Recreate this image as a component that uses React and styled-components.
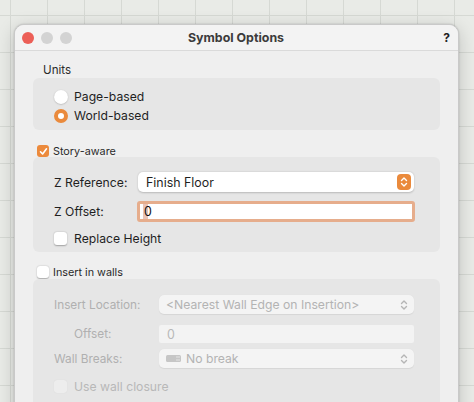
import React from "react";
import styled, { createGlobalStyle } from "styled-components";

const GlobalStyle = createGlobalStyle`
  html, body {
    margin: 0;
    padding: 0;
  }
  body {
    font-family: "Inter", "Liberation Sans", sans-serif;
    -webkit-font-smoothing: antialiased;
  }
`;

const Page = styled.div`
  width: 474px;
  height: 402px;
  overflow: hidden;
  box-sizing: border-box;
  padding: 24px 0 0 14px;
  background-color: #e9ebe7;
  background-image:
    linear-gradient(to right, #d6d9d4 1px, transparent 1px),
    linear-gradient(to bottom, #d6d9d4 1px, transparent 1px);
  background-size: 37px 37px;
  background-position: 10px 15px;
`;

const Window = styled.div`
  width: 445px;
  height: 420px;
  box-sizing: border-box;
  background: #efefef;
  border: 1px solid #c9c9c9;
  border-radius: 10px 10px 0 0;
  box-shadow: 0 4px 18px rgba(0, 0, 0, 0.18), 0 0 2px rgba(0, 0, 0, 0.2);
  overflow: hidden;
`;

const TitleBar = styled.div`
  height: 25px;
  display: flex;
  align-items: center;
  padding: 0 8px 0 7px;
  background: #f3f3f3;
  border-bottom: 1px solid #dadada;
`;

const Lights = styled.div`
  display: flex;
  gap: 7px;
  width: 80px;
`;

const Light = styled.span`
  width: 12px;
  height: 12px;
  border-radius: 50%;
  background: ${(p) => p.$color};
`;

const Title = styled.div`
  flex: 1;
  text-align: center;
  font-size: 12.4px;
  font-weight: 700;
  color: #3b3b3b;
`;

const Help = styled.div`
  width: 80px;
  text-align: right;
  font-size: 12px;
  font-weight: 700;
  color: #222;
`;

const Body = styled.div`
  padding: 12px 18px 0 18px;
  display: flex;
  flex-direction: column;
`;

const SectionLabel = styled.div`
  font-size: 11.6px;
  color: #2a2a2a;
  padding-left: 10px;
  height: 14px;
  line-height: 14px;
`;

const CheckHeader = styled.label`
  display: flex;
  align-items: center;
  gap: 4px;
  font-size: 10.8px;
  color: #2a2a2a;
  padding-left: 4px;
  height: 12px;
  margin-top: ${(p) => p.$top || 0}px;
  margin-bottom: ${(p) => p.$bottom || 0}px;
`;

const Group = styled.div`
  background: #e6e6e6;
  border-radius: 6px;
  padding: ${(p) => p.$pad};
  margin-top: ${(p) => p.$top || 0}px;
  display: flex;
  flex-direction: column;
`;

const RadioRow = styled.div`
  display: flex;
  align-items: center;
  gap: 6px;
  height: 19px;
  font-size: 12.2px;
  color: #1f1f1f;
`;

const Radio = styled.span`
  width: 14px;
  height: 14px;
  box-sizing: border-box;
  border-radius: 50%;
  background: #fff;
  box-shadow: 0 0.5px 1.5px rgba(0, 0, 0, 0.25);
  ${(p) =>
    p.$on &&
    `
    border: 4px solid #ea8a3c;
    box-shadow: none;
  `}
`;

const Box = styled.span`
  width: ${(p) => (p.$big ? 13 : 12)}px;
  height: ${(p) => (p.$big ? 13 : 12)}px;
  flex-shrink: 0;
  box-sizing: border-box;
  border-radius: 3px;
  display: inline-flex;
  align-items: center;
  justify-content: center;
  background: ${(p) => (p.$on ? "#ec8a3c" : p.$dim ? "#ededed" : "#fff")};
  box-shadow: ${(p) =>
    p.$on
      ? "none"
      : p.$dim
      ? "0 0 1px rgba(0,0,0,0.1)"
      : "0 0.5px 1.5px rgba(0,0,0,0.3)"};
`;

const FieldRow = styled.div`
  display: flex;
  align-items: center;
  height: ${(p) => p.$h}px;
  margin-top: ${(p) => p.$top || 0}px;
  margin-right: ${(p) => p.$outset || 0}px;
`;

const FieldLabel = styled.div`
  width: ${(p) => p.$w}px;
  flex-shrink: 0;
  font-size: ${(p) => (p.$dim ? 11.8 : 12.2)}px;
  color: ${(p) => (p.$dim ? "#b0b0b0" : "#1f1f1f")};
  padding-left: ${(p) => p.$indent || 0}px;
  box-sizing: border-box;
`;

const Select = styled.div`
  flex: 1;
  height: 100%;
  display: flex;
  align-items: center;
  gap: 5px;
  padding: 0 3px 0 ${(p) => (p.$dim ? 7 : 8)}px;
  box-sizing: border-box;
  border-radius: 5px;
  background: ${(p) => (p.$dim ? "#f4f4f4" : "#fff")};
  box-shadow: ${(p) =>
    p.$dim ? "0 0.5px 1px rgba(0,0,0,0.07)" : "0 0.5px 2px rgba(0,0,0,0.2)"};
  font-size: ${(p) => (p.$dim ? 12.2 : 12.4)}px;
  color: ${(p) => (p.$dim ? "#b3b3b3" : "#1f1f1f")};
`;

const SelectText = styled.span`
  flex: 1;
  white-space: nowrap;
`;

const Stepper = styled.span`
  width: 14px;
  height: 16px;
  border-radius: 4px;
  display: inline-flex;
  align-items: center;
  justify-content: center;
  background: ${(p) => (p.$dim ? "transparent" : "#ea8a3c")};
`;

const Input = styled.div`
  flex: 1;
  height: 100%;
  box-sizing: border-box;
  display: flex;
  align-items: center;
  padding-left: ${(p) => (p.$focus ? 3 : 8)}px;
  background: ${(p) => (p.$dim ? "#f3f3f3" : "#fff")};
  border: ${(p) => (p.$focus ? "3px solid #e6ad8c" : "none")};
  border-radius: ${(p) => (p.$focus ? 3 : 2)}px;
  font-size: 12.4px;
  color: ${(p) => (p.$dim ? "#b8b8b8" : "#111")};
`;

const Caret = styled.span`
  background: linear-gradient(to right, #e9c3b6 60%, transparent 60%);
  padding-left: 1px;
`;

const CheckRow = styled.div`
  display: flex;
  align-items: center;
  gap: 7px;
  font-size: 12.2px;
  color: ${(p) => (p.$dim ? "#b8b8b8" : "#1f1f1f")};
  height: 18px;
  margin-top: ${(p) => p.$top || 0}px;
`;

function Chevrons({ color }) {
  return (
    <svg width="8" height="12" viewBox="0 0 8 12">
      <path
        d="M1.5 4.5 L4 2 L6.5 4.5 M1.5 7.5 L4 10 L6.5 7.5"
        fill="none"
        stroke={color}
        strokeWidth="1.4"
        strokeLinecap="round"
        strokeLinejoin="round"
      />
    </svg>
  );
}

function Tick() {
  return (
    <svg width="9" height="9" viewBox="0 0 9 9">
      <path
        d="M1.5 4.8 L3.6 7 L7.5 1.8"
        fill="none"
        stroke="#fff"
        strokeWidth="1.6"
        strokeLinecap="round"
        strokeLinejoin="round"
      />
    </svg>
  );
}

function BreakIcon() {
  return (
    <svg width="15" height="7" viewBox="0 0 15 7">
      <rect x="0" y="0" width="15" height="7" rx="1.5" fill="#c6c6c6" />
      <path d="M10 2 H14 M10 5 H14" stroke="#ececec" strokeWidth="0.8" />
    </svg>
  );
}

export default function App() {
  return (
    <Page>
      <GlobalStyle />
      <Window>
        <TitleBar>
          <Lights>
            <Light $color="#ec5f57" />
            <Light $color="#d3d3d3" />
            <Light $color="#d3d3d3" />
          </Lights>
          <Title>Symbol Options</Title>
          <Help>?</Help>
        </TitleBar>

        <Body>
          <SectionLabel>Units</SectionLabel>
          <Group $pad="9px 0 5px 21px" $top={1}>
            <RadioRow>
              <Radio />
              Page-based
            </RadioRow>
            <RadioRow>
              <Radio $on />
              World-based
            </RadioRow>
          </Group>

          <CheckHeader $top={15}>
            <Box $on>
              <Tick />
            </Box>
            Story-aware
          </CheckHeader>
          <Group $pad="15px 26px 5px 21px">
            <FieldRow $h={20}>
              <FieldLabel $w={84}>Z Reference:</FieldLabel>
              <Select>
                <SelectText>Finish Floor</SelectText>
                <Stepper>
                  <Chevrons color="#fff" />
                </Stepper>
              </Select>
            </FieldRow>
            <FieldRow $h={21} $top={9} $outset={-1}>
              <FieldLabel $w={83}>Z Offset:</FieldLabel>
              <Input $focus>
                <Caret>0</Caret>
              </Input>
            </FieldRow>
            <CheckRow $top={7}>
              <Box $big />
              Replace Height
            </CheckRow>
          </Group>

          <CheckHeader $top={14} $bottom={1}>
            <Box />
            Insert in walls
          </CheckHeader>
          <Group $pad="16px 26px 20px 21px">
            <FieldRow $h={19}>
              <FieldLabel $w={105} $dim>
                Insert Location:
              </FieldLabel>
              <Select $dim>
                <SelectText>&lt;Nearest Wall Edge on Insertion&gt;</SelectText>
                <Stepper $dim>
                  <Chevrons color="#b5b5b5" />
                </Stepper>
              </Select>
            </FieldRow>
            <FieldRow $h={18} $top={11}>
              <FieldLabel $w={105} $dim $indent={20}>
                Offset:
              </FieldLabel>
              <Input $dim>0</Input>
            </FieldRow>
            <FieldRow $h={19} $top={6}>
              <FieldLabel $w={105} $dim>
                Wall Breaks:
              </FieldLabel>
              <Select $dim>
                <BreakIcon />
                <SelectText>No break</SelectText>
                <Stepper $dim>
                  <Chevrons color="#b5b5b5" />
                </Stepper>
              </Select>
            </FieldRow>
            <CheckRow $dim $top={9}>
              <Box $big $dim />
              Use wall closure
            </CheckRow>
          </Group>
        </Body>
      </Window>
    </Page>
  );
}
